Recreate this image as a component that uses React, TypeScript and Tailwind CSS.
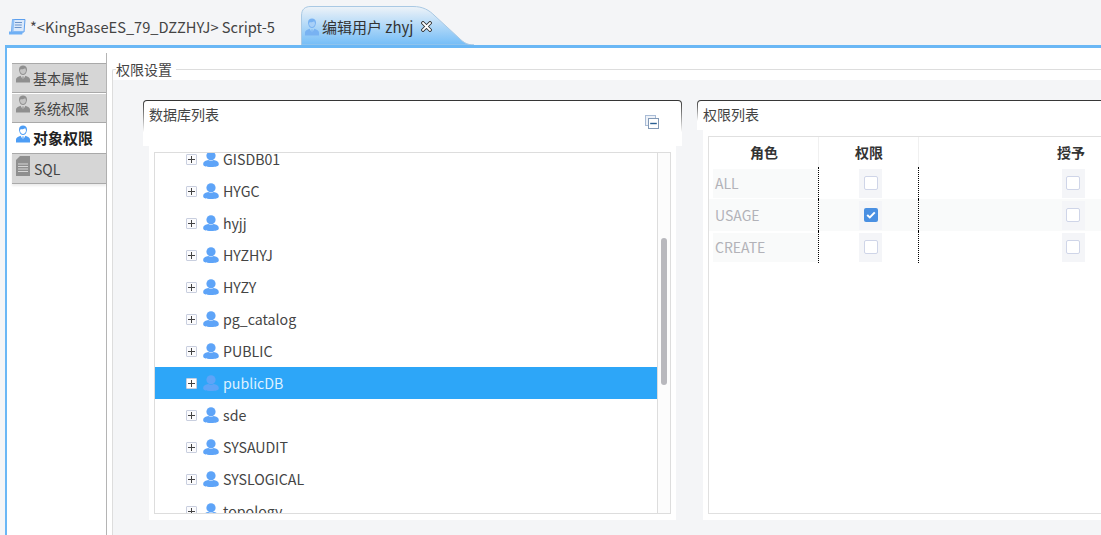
import React from 'react';

const font = { fontFamily: '"Noto Sans CJK SC", "Noto Sans", sans-serif' };

const treeItems = ['GISDB01', 'HYGC', 'hyjj', 'HYZHYJ', 'HYZY', 'pg_catalog', 'PUBLIC', 'publicDB', 'sde', 'SYSAUDIT', 'SYSLOGICAL', 'topology'];

const UserIcon = () => (
  <svg width="16" height="16" viewBox="0 0 16 16" className="shrink-0">
    <circle cx="8" cy="4.8" r="4.6" fill="#5ea4f8" />
    <path d="M0.2 13.3C0.2 10.4 3 9.4 5.2 9.1C6.8 10.2 9.2 10.2 10.8 9.1C13 9.4 15.8 10.4 15.8 13.3C15.8 15.3 13.5 16 8 16C2.5 16 0.2 15.3 0.2 13.3Z" fill="#5ea4f8" />
  </svg>
);

const AgentIcon = ({ color, face = 'white' }: { color: string; face?: string }) => (
  <svg width="14" height="18" viewBox="0 0 14 18" className="shrink-0">
    <path d="M3 4.5C3 1.8 4.8 0.5 7 0.5C9.2 0.5 11 1.8 11 4.5C11 5.2 10.9 5.8 10.7 6.3C10.4 8.4 8.8 10 7 10C5.2 10 3.6 8.4 3.3 6.3C3.1 5.8 3 5.2 3 4.5Z" fill={color} />
    <path d="M4.2 4.4C5.8 4.4 7.8 4 9.2 3.2C9.6 4 9.9 4.5 10 5.4C9.8 7.4 8.5 8.9 7 8.9C5.5 8.9 4.2 7.4 4 5.4Z" fill={face} />
    <path d="M0 17.5V14.5C0 12.6 2.2 11.6 4.6 10.8L7 15L9.4 10.8C11.8 11.6 14 12.6 14 14.5V17.5Z" fill={color} />
    <path d="M6.2 11.6H7.8L7.5 12.8L8 15L7 16.2L6 15L6.5 12.8Z" fill={color} />
  </svg>
);

const SqlIcon = () => (
  <svg width="14" height="20" viewBox="0 0 14 20" className="shrink-0">
    <path d="M4 0H14V20H0V4Z" fill="#8f8f8f" />
    <path d="M2 8H12M2 10.5H12M2 13H12M2 15.5H12" stroke="#d6d6d6" strokeWidth="1" />
  </svg>
);

const ScriptIcon = () => (
  <svg width="17" height="16" viewBox="0 0 17 16" className="shrink-0">
    <path d="M3.5 0.5H16L15 13H2.5Z" fill="#dbe9fb" stroke="#5c9fee" strokeWidth="1" />
    <path d="M6 3.5H13M5.8 6H12.8M5.6 8.5H12.6" stroke="#6b93c9" strokeWidth="1" />
    <path d="M0 12.5H14L13.2 15.5H0Z" fill="#6fb0f5" />
    <path d="M3.5 0.5H5.5L4.5 12.5H2.5Z" fill="#8fc0f6" />
  </svg>
);

const CloseIcon = () => (
  <svg width="11" height="11" viewBox="0 0 11 11" className="shrink-0">
    <path d="M2 2L9 9M9 2L2 9" stroke="#333" strokeWidth="3.6" strokeLinecap="square" />
    <path d="M2 2L9 9M9 2L2 9" stroke="white" strokeWidth="1.8" strokeLinecap="square" />
  </svg>
);

const CollapseIcon = () => (
  <svg width="14" height="14" viewBox="0 0 14 14">
    <rect x="0.5" y="0.5" width="10" height="10" fill="#eef2f8" stroke="#a9bcd6" />
    <rect x="3.5" y="3.5" width="10" height="10" fill="white" stroke="#8299b6" />
    <path d="M5.2 8.5H11.8" stroke="#2a5f92" strokeWidth="1.4" />
  </svg>
);

const PlusBox = ({ selected }: { selected?: boolean }) => (
  <span className={`flex h-[11px] w-[11px] shrink-0 items-center justify-center rounded-[1px] border border-[#c9cfdf] ${selected ? 'bg-white' : 'bg-[#fbfbfd]'}`}>
    <svg width="7" height="7" viewBox="0 0 7 7">
      <path d="M0 3.5H7M3.5 0V7" stroke="#444" strokeWidth="1" />
    </svg>
  </span>
);

const Check = ({ checked }: { checked?: boolean }) => (
  <div className="flex h-[29px] w-[23px] items-center justify-center bg-[#f4f5f8]">
    {checked ? (
      <span className="flex h-[14px] w-[14px] items-center justify-center rounded-[2px] bg-[#4a90e2]">
        <svg width="10" height="8" viewBox="0 0 10 8">
          <path d="M1.2 4L3.8 6.4L8.8 1.4" fill="none" stroke="white" strokeWidth="2" />
        </svg>
      </span>
    ) : (
      <span className="h-[14px] w-[14px] rounded-[2px] border border-[#cfd5e8] bg-white" />
    )}
  </div>
);

const PanelHeader = ({ title, tall, children }: { title: string; tall?: boolean; children?: React.ReactNode }) => (
  <div className={`rounded-t-[4px] bg-gradient-to-b from-[#333] via-white via-[70%] to-white px-px pt-px ${tall ? 'h-[46px]' : 'h-[30px]'}`}>
    <div className="flex h-full items-start justify-between rounded-t-[3px] bg-white pl-[5px] pr-[22px]">
      <span className="mt-[3px] text-[14px] leading-[20px] text-[#444]">{title}</span>
      {children}
    </div>
  </div>
);

const rows = ['ALL', 'USAGE', 'CREATE'];

export default function App() {
  return (
    <div style={font} className="flex h-[535px] w-[1101px] flex-col overflow-hidden bg-[#f4f5f7]">
      {/* editor tabs */}
      <div className="flex h-[45px] shrink-0 items-end pl-[9px]">
        <div className="flex h-[39px] w-[292px] items-start gap-[4px] pt-[13px]">
          <ScriptIcon />
          <span className="-mt-[2px] text-[14.67px] leading-[20px] text-[#444]">*&lt;KingBaseES_79_DZZHYJ&gt; Script-5</span>
        </div>
        <div className="relative flex h-[39px] w-[173px] items-start pl-[4px] pt-[13px]">
          <svg width="173" height="39" viewBox="0 0 173 39" className="absolute left-0 top-0">
            <defs>
              <linearGradient id="tabFill" x1="0" y1="0" x2="0" y2="1">
                <stop offset="0" stopColor="#eef3f8" />
                <stop offset="1" stopColor="#74bdf7" />
              </linearGradient>
            </defs>
            <path d="M0.5 39V10C0.5 3 4 0.5 10 0.5H112C122 0.5 128 4 134 10L158 32C163 37 167 39 173 39Z" fill="url(#tabFill)" stroke="#a9c9e4" strokeWidth="1" />
          </svg>
          <span className="relative -mt-[1px]">
            <AgentIcon color="#78b2f2" face="#a8d0f8" />
          </span>
          <span className="relative -mt-[2px] ml-[3px] text-[15px] leading-[20px] text-[#333]">编辑用户 zhyj</span>
          <span className="relative ml-[8px] mt-[2px]">
            <CloseIcon />
          </span>
        </div>
      </div>

      {/* editor body */}
      <div className="ml-[5px] flex min-h-0 flex-1 border-l-2 border-t-[3px] border-[#6ab7f5] bg-white">
        {/* side tabs */}
        <div className="mt-[5px] flex w-[100px] shrink-0 flex-col border-r border-[#b4b4b4] pl-[5px] pt-[10px]">
          <div className="mb-[1px] flex h-[30px] items-start border-y border-[#a9a9a9] bg-[#d6d6d6] pl-[4px] text-[#444]">
            <span className="mt-[1px]"><AgentIcon color="#8f8f8f" face="#c4c4c4" /></span>
            <span className="ml-[3px] mt-[4px] text-[14px] leading-[20px]">基本属性</span>
          </div>
          <div className="flex h-[29px] items-start border-b border-[#a9a9a9] bg-[#d6d6d6] pl-[4px] text-[#444]">
            <span className="mt-[1px]"><AgentIcon color="#8f8f8f" face="#c4c4c4" /></span>
            <span className="ml-[3px] mt-[4px] text-[14px] leading-[20px]">系统权限</span>
          </div>
          <div className="flex h-[30px] items-start pl-[4px] font-bold text-[#222]">
            <span className="mt-[2px]"><AgentIcon color="#4d9df5" /></span>
            <span className="ml-[3px] mt-[5px] text-[15px] leading-[20px]">对象权限</span>
          </div>
          <div className="flex h-[31px] items-start border-y border-[#a9a9a9] bg-[#d6d6d6] pl-[4px] text-[#444] shadow-[0_2px_2px_rgba(0,0,0,0.08)]">
            <span className="mt-[2px]"><SqlIcon /></span>
            <span className="ml-[4px] mt-[5px] text-[14px] leading-[20px]">SQL</span>
          </div>
        </div>

        {/* content */}
        <div className="ml-[5px] flex min-w-0 flex-1 flex-col overflow-hidden">
          <div className="mt-[11px] flex h-[21px] shrink-0">
            <div className="mt-[10px] h-[11px] w-[4px] rounded-tl-[2px] border-l border-t border-[#ddd]" />
            <span className="text-[14px] leading-[20px] text-[#444]">权限设置</span>
            <div className="ml-[4px] mt-[10px] flex-1 border-t border-[#ddd]" />
          </div>

          <div className="flex min-h-0 flex-1 gap-[15px] border-l border-[#ddd] bg-[#f4f5f7] pb-[15px] pl-[30px] pt-[20px]">
            {/* database list */}
            <div className="flex w-[539px] shrink-0 flex-col">
              <PanelHeader title="数据库列表" tall>
                <span className="mt-[14px] ml-[1px]">
                  <CollapseIcon />
                </span>
              </PanelHeader>
              <div className="mx-[6px] flex min-h-0 flex-1 bg-white px-[5px] pb-[6px] pt-[6px]">
                <div className="flex min-w-0 flex-1 border border-[#ddd]">
                  <div className="min-w-0 flex-1 overflow-hidden">
                    <div className="-mt-[10px] flex flex-col">
                      {treeItems.map((name) => {
                        const selected = name === 'publicDB';
                        return (
                          <div key={name} className={`flex h-[32px] shrink-0 items-center pl-[31px] ${selected ? 'bg-[#2da6f8] text-[#dff1ff]' : 'text-[#444]'}`}>
                            <PlusBox selected={selected} />
                            <span className="ml-[6px] -mt-[1px]">
                              <UserIcon />
                            </span>
                            <span className="ml-[4px] text-[14.2px] leading-[20px]">{name}</span>
                          </div>
                        );
                      })}
                    </div>
                  </div>
                  <div className="w-[13px] shrink-0 border-l border-[#ddd] bg-[#fcfcfc] pl-[3px] pt-[85px]">
                    <div className="h-[147px] w-[6px] rounded-[3px] bg-[#b8b8bd]" />
                  </div>
                </div>
              </div>
            </div>

            {/* permission list */}
            <div className="flex w-[600px] shrink-0 flex-col">
              <PanelHeader title="权限列表" />
              <div className="ml-[6px] flex min-h-0 flex-1 bg-white pb-[6px] pl-[5px] pt-[6px]">
                <div className="flex-1 border border-r-0 border-[#e0e0e0]">
                  <div className="grid h-[30px] grid-cols-[110px_100px_307px] text-[14px] font-bold leading-[20px] text-[#333]">
                    <div className="flex items-center justify-center border-r border-[#f0f0f0] pb-[1px] pl-[1px]">角色</div>
                    <div className="flex items-center justify-center border-r border-[#f0f0f0] pb-[1px] pl-[1px]">权限</div>
                    <div className="flex items-center justify-center pb-[1px] pr-[3px]">授予</div>
                  </div>
                  {rows.map((role) => (
                    <div key={role} className={`grid h-[32px] grid-cols-[110px_100px_307px] items-center ${role === 'USAGE' ? 'bg-[#f9fafa]' : ''}`}>
                      <div className="flex h-full items-center border-r border-dotted border-black pl-[4px]">
                        <span className="flex h-[29px] w-full items-center bg-[#f9fafa] pl-[2px] text-[14px] leading-[20px] text-[#b2b2b8]">{role}</span>
                      </div>
                      <div className="flex h-full items-center justify-center border-r border-dotted border-black pl-[4px]">
                        <Check checked={role === 'USAGE'} />
                      </div>
                      <div className="flex h-full items-center justify-center pl-[1px]">
                        <Check />
                      </div>
                    </div>
                  ))}
                </div>
              </div>
            </div>
          </div>
        </div>
      </div>
    </div>
  );
}
